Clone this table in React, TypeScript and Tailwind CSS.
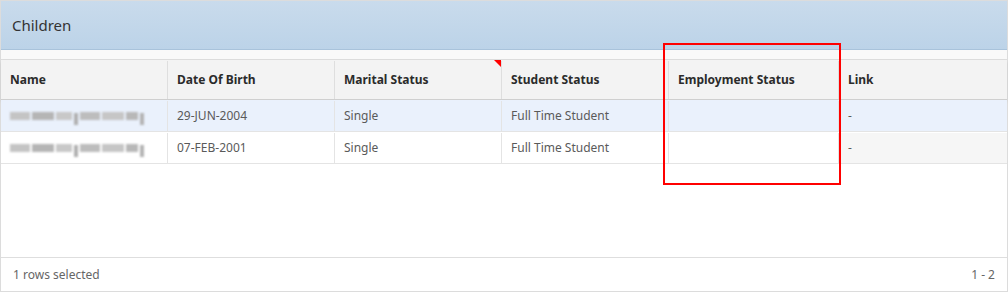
const columns = [
  { key: "name", label: "Name", w: "w-[167px]" },
  { key: "dob", label: "Date Of Birth", w: "w-[167px]" },
  { key: "marital", label: "Marital Status", w: "w-[167px]" },
  { key: "student", label: "Student Status", w: "w-[167px]" },
  { key: "employment", label: "Employment Status", w: "w-[170px]" },
  { key: "link", label: "Link", w: "flex-1" },
];

const rows = [
  { name: "xxxxxxx_x.xxxxxxx_x", dob: "29-JUN-2004", marital: "Single", student: "Full Time Student", employment: "", link: "-" },
  { name: "xxxxxxx_x.xxxxxxx_x", dob: "07-FEB-2001", marital: "Single", student: "Full Time Student", employment: "", link: "-" },
];

function BlurredName() {
  // the name is masked in the screenshot
  return (
    <div className="flex items-center gap-[2px] blur-[1px]">
      <div className="h-[8px] w-[20px] bg-[#c4c4c4]" />
      <div className="h-[8px] w-[22px] bg-[#b5b5b5]" />
      <div className="h-[8px] w-[16px] bg-[#c8c8c8]" />
      <div className="mt-[6px] h-[12px] w-[4px] bg-[#b0b0b0]" />
      <div className="h-[8px] w-[20px] bg-[#bdbdbd]" />
      <div className="h-[8px] w-[22px] bg-[#c6c6c6]" />
      <div className="h-[8px] w-[12px] bg-[#b8b8b8]" />
      <div className="mt-[6px] h-[12px] w-[4px] bg-[#b3b3b3]" />
    </div>
  );
}

export default function App() {
  return (
    <div
      className="relative h-[292px] w-[1008px] bg-white text-[12px]"
      style={{ fontFamily: '"Segoe UI", "Noto Sans", "Open Sans", sans-serif' }}
    >
      <div className="flex h-full flex-col border border-[#dcdcdc]">
        <div className="flex h-[49px] items-center border-b border-[#a9c3db] bg-gradient-to-b from-[#c9dbec] to-[#bcd3e8] px-[11px] text-[15px] text-[#333]">
          Children
        </div>
        <div className="h-[10px] border-b border-[#dddddd] bg-[#f9f9f9]" />

        <div className="flex h-[40px] border-b border-[#cfcfcf] bg-[#f3f3f3] pt-[1px] shadow-[0_2px_3px_rgba(0,0,0,0.08)]">
          {columns.map((c, i) => (
            <div
              key={c.key}
              className={`relative flex items-center px-[9px] font-bold text-[#2b2b2b] ${c.w} ${
                i < columns.length - 1 ? "border-r border-[#dedede]" : ""
              }`}
            >
              {c.label}
              {c.key === "marital" && (
                <div className="absolute right-0 top-[-1px] h-0 w-0 border-l-[7px] border-t-[7px] border-l-transparent border-t-[#ff0000]" />
              )}
            </div>
          ))}
        </div>

        {rows.map((r, ri) => (
          <div
            key={ri}
            className={`flex h-[32px] border-b border-[#e4e4e4] pt-[1px] text-[#5a5a5a] ${ri === 0 ? "bg-[#eaf1fc]" : "bg-white"}`}
          >
            {columns.map((c, i) => (
              <div
                key={c.key}
                className={`flex items-center px-[9px] ${c.w} ${
                  i < columns.length - 1 ? "border-r border-[#e4e4e4]" : ""
                } ${ri === 1 && c.key === "link" ? "bg-[#f6f6f6]" : ""}`}
              >
                {c.key === "name" ? <BlurredName /> : (r as any)[c.key]}
              </div>
            ))}
          </div>
        ))}

        <div className="flex-1" />

        <div className="flex h-[34px] items-center justify-between border-t border-[#dedede] px-[12px] text-[12px] text-[#666]">
          <span>1 rows selected</span>
          <span>1 - 2</span>
        </div>
      </div>

      {/* red highlight drawn over the table */}
      <div className="absolute left-[663px] top-[43px] h-[142px] w-[178px] border-2 border-[#ff0000]" />
    </div>
  );
}
